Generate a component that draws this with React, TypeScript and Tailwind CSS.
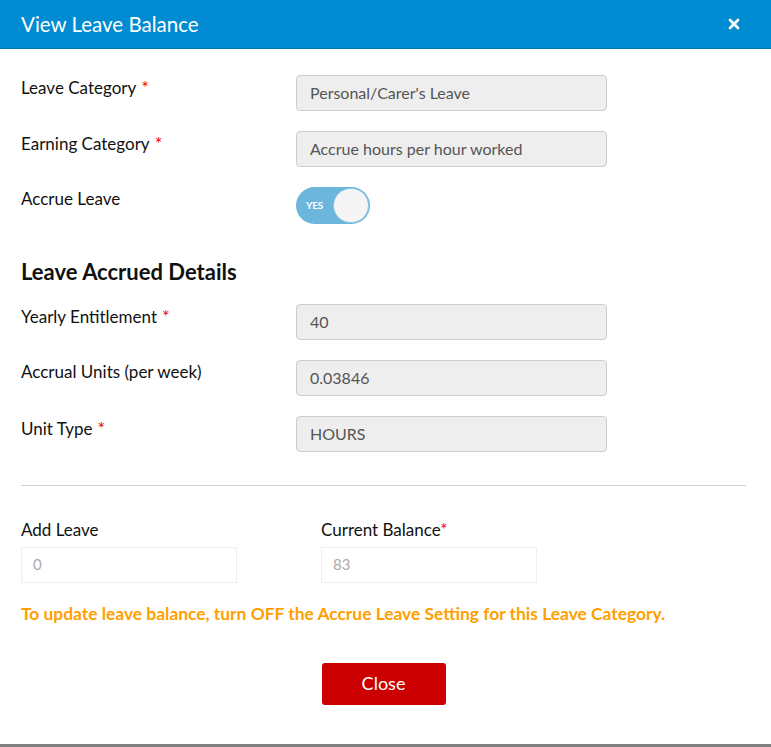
import { X } from 'lucide-react';

const topFields = [
  { label: 'Leave Category', value: "Personal/Carer's Leave", required: true },
  { label: 'Earning Category', value: 'Accrue hours per hour worked', required: true },
];

const accruedFields = [
  { label: 'Yearly Entitlement', value: '40', required: true },
  { label: 'Accrual Units (per week)', value: '0.03846', required: false },
  { label: 'Unit Type', value: 'HOURS', required: true },
];

function Field({ label, value, required }: { label: string; value: string; required: boolean }) {
  return (
    <div className="flex items-start h-[36px]">
      <div className="w-[275px] -mt-[1px] text-[17px] text-[#111]">
        {label}
        {required && <span className="text-[#e00] ml-[5px] text-[18px]">*</span>}
      </div>
      <div className="w-[311px] h-[36px] flex items-center px-[13px] bg-[#eeeeee] border border-[#cccccc] rounded-[4px] text-[16px] text-[#555]">
        {value}
      </div>
    </div>
  );
}

export default function App() {
  return (
    <div className="w-[771px] h-[747px] bg-[#808080] font-['Lato',sans-serif]">
      <div className="h-[744px] bg-white flex flex-col">
        {/* Header */}
        <div className="h-[49px] bg-[#008bd2] border-b border-[#0a74ad] flex items-center justify-between pl-[21px] pr-[29px]">
          <h2 className="text-white text-[20.5px]">View Leave Balance</h2>
          <X className="w-[16px] h-[16px] text-white" strokeWidth={4} />
        </div>

        <div className="px-[21px] pt-[26px] flex flex-col">
          <div className="flex flex-col gap-[20px]">
            {topFields.map((f) => (
              <Field key={f.label} {...f} />
            ))}
            <div className="flex items-start">
              <div className="w-[275px] -mt-[1px] text-[17px] text-[#111]">Accrue Leave</div>
              <div className="w-[74px] h-[37px] rounded-full bg-[#6cb6dd] flex items-center justify-between pl-[10px] pr-[1px]">
                <span className="text-white text-[10px] font-bold tracking-tight">YES</span>
                <span className="w-[36px] h-[35px] rounded-full bg-[#f5f5f5] border border-[#8cc6e6]" />
              </div>
            </div>
          </div>

          <h3 className="mt-[31px] text-[22px] font-bold text-[#111]">Leave Accrued Details</h3>

          <div className="mt-[16px] flex flex-col gap-[20px]">
            {accruedFields.map((f) => (
              <Field key={f.label} {...f} />
            ))}
          </div>

          <hr className="mt-[33px] mr-[4px] border-t border-[#d0d0d0]" />

          {/* Balance */}
          <div className="mt-[31px] flex gap-[84px]">
            <div className="flex flex-col gap-[4px]">
              <label className="text-[17px] text-[#111]">Add Leave</label>
              <div className="w-[216px] h-[36px] border border-[#eeeeee] flex items-center px-[11px] text-[15px] text-[#aaa]">0</div>
            </div>
            <div className="flex flex-col gap-[4px]">
              <label className="text-[17px] text-[#111]">
                Current Balance<span className="text-[#e00]">*</span>
              </label>
              <div className="w-[216px] h-[36px] border border-[#eeeeee] flex items-center px-[11px] text-[15px] text-[#aaa]">83</div>
            </div>
          </div>

          <p className="mt-[18px] text-[17.4px] font-bold text-[#ffa000]">
            To update leave balance, turn OFF the Accrue Leave Setting for this Leave Category.
          </p>

          <div className="mt-[36px] flex justify-center pr-[4px]">
            <button className="w-[124px] h-[42px] bg-[#cc0000] rounded-[3px] text-white text-[18px]">Close</button>
          </div>
        </div>
      </div>
    </div>
  );
}
